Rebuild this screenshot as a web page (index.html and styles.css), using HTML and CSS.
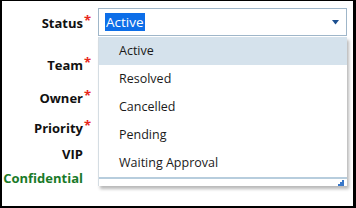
FILE: index.html
```html
<!DOCTYPE html>
<html lang="en">
<head>
  <meta charset="UTF-8"/>
  <title>Ticket form</title>
  <link rel="stylesheet" href="styles.css">
</head>
<body>
  <div class="frame">
    <div class="labels">
      <div class="lbl row-status">Status<span class="req">*</span></div>
      <div class="lbl row-team">Team<span class="req">*</span></div>
      <div class="lbl row-owner">Owner<span class="req">*</span></div>
      <div class="lbl row-priority">Priority<span class="req">*</span></div>
      <div class="lbl row-vip">VIP<span class="req"></span></div>
      <div class="lbl lbl-green row-conf">Confidential</div>
    </div>

    <div class="fields">
      <div class="select">
        <span class="sel-text">Active</span>
        <svg class="arrow" width="7" height="5" viewBox="0 0 7 5"><path d="M0 0h7L3.5 4.5z" fill="#1b4f8f"/></svg>
      </div>

      <div class="menu">
        <ul class="opts">
          <li class="on">Active</li>
          <li>Resolved</li>
          <li>Cancelled</li>
          <li>Pending</li>
          <li>Waiting Approval</li>
        </ul>
        <div class="menu-foot">
          <svg class="grip" width="6" height="6" viewBox="0 0 6 6" fill="#3a78c9">
            <rect x="4" y="0" width="2" height="2"/>
            <rect x="2" y="2" width="2" height="2"/><rect x="4" y="2" width="2" height="2"/>
            <rect x="0" y="4" width="2" height="2"/><rect x="2" y="4" width="2" height="2"/><rect x="4" y="4" width="2" height="2"/>
          </svg>
        </div>
      </div>
    </div>
  </div>
</body>
</html>
```

FILE: styles.css
```css
body{margin:0;background:#fff;font-family:'Open Sans',sans-serif;}
.frame{width:356px;height:208px;box-sizing:border-box;border:2px solid #000;border-top-width:1px;border-right-width:3px;display:flex;background:#fff;}
.labels{width:96px;padding-right:6px;box-sizing:border-box;display:flex;flex-direction:column;align-items:flex-end;}
.lbl{font-weight:bold;font-size:13px;line-height:20px;color:#111;display:flex;}
.req{color:#e8261c;width:8px;font-size:13px;line-height:14px;padding-left:1px;}
.lbl-green{color:#1a7a28;padding-right:9px;}
.row-status{margin-top:12px;}
.row-team{margin-top:22px;}
.row-owner{margin-top:13px;}
.row-priority{margin-top:10px;}
.row-vip{margin-top:6px;}
.row-conf{margin-top:4px;}
.fields{position:relative;flex:1;}
.select{margin-top:7px;width:249px;height:28px;box-sizing:border-box;border:1px solid #9fb6c9;display:flex;align-items:center;padding-left:6px;}
.sel-text{background:#0d6ee8;color:#fff;font-size:13.5px;line-height:18px;padding:0 1px;}
.arrow{margin-left:auto;margin-right:7px;}
.menu{position:absolute;left:0;top:36px;width:248px;background:#fff;border-left:1px solid #d5dde3;box-shadow:2px 3px 3px rgba(0,0,0,.28);}
.opts{margin:0;padding:0;list-style:none;border-bottom:2px solid #b7cddd;}
.opts li{height:28px;line-height:28px;padding-left:20px;font-size:12.5px;color:#1a1a1a;}
.opts li.on{background:#d5e2ec;}
.menu-foot{height:7px;display:flex;justify-content:flex-end;align-items:center;padding-right:3px;}
```
